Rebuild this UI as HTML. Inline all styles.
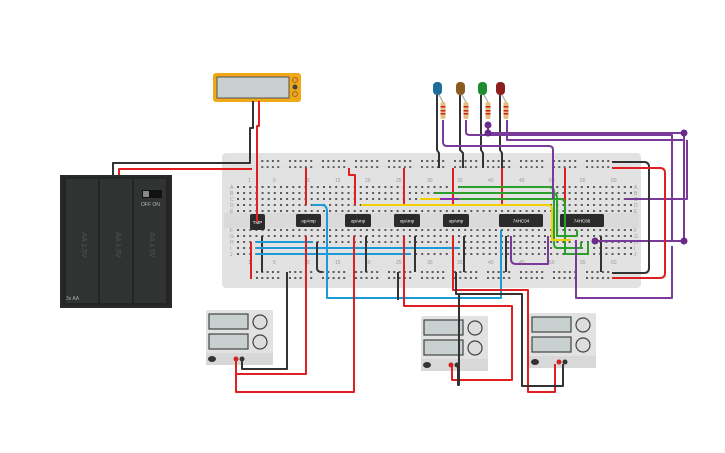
<!DOCTYPE html>
<html><head><meta charset="utf-8"><style>
html,body{margin:0;padding:0;background:#fff;width:725px;height:453px;overflow:hidden}
svg{display:block}
text{font-family:"Liberation Sans",sans-serif}
</style></head><body>
<svg id="s" width="725" height="453" viewBox="0 0 725 453" xmlns="http://www.w3.org/2000/svg">
<!-- breadboard -->
<rect x="222" y="153" width="419" height="135" rx="4" fill="#e2e2e2"/>
<rect x="224" y="213" width="415" height="15" fill="#dadada"/>
<g id="holes" fill="#5a5a5a"></g>
<g id="labels" fill="#9a9a9a" font-size="5"></g>
<line x1="235" y1="166" x2="630" y2="166" stroke="#d6d6d6" stroke-width="0.5"/>

<!-- chips -->
<g font-size="4.5" fill="#fff" text-anchor="middle">
<rect x="250" y="214" width="15" height="16" rx="2" fill="#2b2b2b"/><text x="257.5" y="224">TMP</text>
<rect x="296" y="214" width="25" height="13" rx="1.5" fill="#2b2b2b"/><text x="308.5" y="222.5">opAmp</text>
<rect x="345" y="214" width="26" height="13" rx="1.5" fill="#2b2b2b"/><text x="358" y="222.5">opAmp</text>
<rect x="394" y="214" width="26" height="13" rx="1.5" fill="#2b2b2b"/><text x="407" y="222.5">opAmp</text>
<rect x="443" y="214" width="26" height="13" rx="1.5" fill="#2b2b2b"/><text x="456" y="222.5">opAmp</text>
<rect x="499" y="214" width="44" height="13" rx="1.5" fill="#2b2b2b"/><text x="521" y="222.5">74HC04</text>
<rect x="560" y="214" width="44" height="13" rx="1.5" fill="#2b2b2b"/><text x="582" y="222.5">74HC86</text>
</g>

<!-- battery -->
<rect x="60" y="175" width="112" height="133" fill="#2a2a2a"/>
<rect x="62" y="177" width="108" height="129" fill="#242424"/>
<rect x="66" y="179" width="32" height="124" fill="#2f3432"/>
<rect x="100" y="179" width="32" height="124" fill="#2f3432"/>
<rect x="134" y="179" width="32" height="124" fill="#2f3432"/>
<g fill="#555" font-size="7" text-anchor="middle">
<text transform="translate(82,245) rotate(90)">AA 1.5V</text>
<text transform="translate(116,245) rotate(90)">AA 1.5V</text>
<text transform="translate(150,245) rotate(90)">AA 1.5V</text>
</g>
<rect x="142" y="190" width="20" height="8" fill="#111"/><rect x="143" y="191" width="6" height="6" fill="#888"/>
<text x="141" y="206" font-size="5" fill="#bbb">OFF  ON</text>
<text x="66" y="300" font-size="5" fill="#aaa">3x AA</text>

<!-- multimeter -->
<rect x="213" y="73" width="88" height="29" rx="3" fill="#f0a818"/>
<rect x="217" y="77" width="72" height="21" fill="#c9d0d0" stroke="#555" stroke-width="1"/>
<circle cx="295" cy="80" r="2.5" fill="#e8a030" stroke="#8a5a10" stroke-width="0.7"/>
<circle cx="295" cy="87" r="2.5" fill="#444"/>
<circle cx="295" cy="94" r="2.5" fill="#e8a030" stroke="#8a5a10" stroke-width="0.7"/>

<!-- power supplies -->
<g id="ps"></g>

<!-- wires -->
<g fill="none" stroke-width="2" stroke-linejoin="round">
<!-- battery/multimeter -->
<path d="M113 175 V163 H250 V128 H253 V101" stroke="#333"/>
<path d="M119 175 V169 H252" stroke="#e02020"/>
<path d="M259 101 V126 H257 V222" stroke="#e02020"/>
<path d="M251 242 V279" stroke="#e02020"/>
<path d="M262 236 V272" stroke="#333"/>
<!-- blue -->
<path d="M256 242 H313" stroke="#1a9ad6"/>
<path d="M256 248 H460" stroke="#1a9ad6"/>
<path d="M256 254 H411" stroke="#1a9ad6"/>
<path d="M312 205 H322 Q327 205 327 212 V298 H501 V230" stroke="#1a9ad6"/>
<!-- opamp wires -->
<path d="M306 168 V205" stroke="#e02020"/>
<path d="M306 236 V374 H236 V359" stroke="#e02020"/>
<path d="M317 242 V268 Q317 272 322 272" stroke="#333"/>
<path d="M287 272 V369 H242 V359" stroke="#333"/>
<path d="M349 168 V175 H355 V205" stroke="#e02020"/>
<path d="M354 236 V392 H236 V374" stroke="#e02020"/>
<path d="M366 236 V272" stroke="#333"/>
<path d="M404 168 V205" stroke="#e02020"/>
<path d="M404 236 V306 H512 V380 H452 V366" stroke="#e02020"/>
<path d="M415 236 V272" stroke="#333"/>
<path d="M398 272 V300" stroke="#333"/>
<path d="M453 168 V205" stroke="#e02020"/>
<path d="M453 236 V290 H528 V392 H555 V364" stroke="#e02020"/>
<path d="M464 236 V272" stroke="#333"/>
<path d="M456 272 V294 H522 V386 H563 V364" stroke="#333"/>
<path d="M459 294 V385 H458 V366" stroke="#333"/>
<path d="M502 168 V205" stroke="#e02020"/>
<path d="M506 236 V272" stroke="#333"/>
<path d="M565 168 V205" stroke="#e02020"/>
<path d="M601 236 V272" stroke="#333"/>
<!-- LED legs -->
<path d="M437 95 V150 L439 153 V168" stroke="#333"/>
<path d="M460 95 V150 L463 153 V168" stroke="#333"/>
<path d="M481 95 V150 L483 153 V168" stroke="#333"/>
<path d="M500 95 V150 L502 153 V168" stroke="#333"/>
<!-- green/yellow -->
<path d="M459 187 H549 Q554 187 554 192 V244 Q554 248 558 248 H581 V242" stroke="#2aa02a"/>
<path d="M435 193 H552 Q557 193 557 198 V236 H577 V230" stroke="#2aa02a"/>
<path d="M422 199 H561 Q565 199 565 205 V254 H588 V242" stroke="#2aa02a"/>
<path d="M361 205 H548 Q552 205 552 210 V240 H571" stroke="#f2d000"/>
<path d="M420 199 H440" stroke="#f2d000"/>
<path d="M440 199 H459" stroke="#8a2ab0"/>
<!-- purple -->
<path d="M443 120 V142 Q443 146 447 146 H549 Q553 146 553 150 V199" stroke="#7a3a9a"/>
<path d="M466 120 V132 Q466 135 470 135 H672 V240" stroke="#7a3a9a"/>
<path d="M488 125 V133 H684 V241 H595" stroke="#7a3a9a"/>
<path d="M507 120 V140 H684" stroke="#7a3a9a"/>
<path d="M687 140 V199 H625" stroke="#7a3a9a"/>
<path d="M511 236 V259 Q511 264 516 264 H548 V236" stroke="#7a3a9a"/>
<path d="M576 240 V298 H672 V246" stroke="#7a3a9a"/>
<!-- right rails -->
<path d="M612 162 H644 Q649 162 649 167 V268 Q649 273 644 273 H612" stroke="#333"/>
<path d="M612 168 H660 Q665 168 665 173 V273 Q665 278 660 278 H612" stroke="#e02020"/>
</g>
<g fill="#6a2a8a">
<circle cx="488" cy="125" r="3.5"/><circle cx="488" cy="133" r="3.5"/>
<circle cx="684" cy="133" r="3.5"/><circle cx="684" cy="241" r="3.5"/><circle cx="595" cy="241" r="3.5"/>
</g>
<!-- LEDs & resistors -->
<g id="leds"></g>
</svg>
<script>
var NS="http://www.w3.org/2000/svg";
function el(p,t,a){var e=document.createElementNS(NS,t);for(var k in a)e.setAttribute(k,a[k]);p.appendChild(e);return e;}
var H=document.getElementById('holes');
var rows=[187,193,199,205,211,230,236,242,248,254];
for(var r of rows)for(var i=0;i<65;i++)el(H,'rect',{x:(237+i*6.14).toFixed(1),y:r-1,width:2,height:2});
for(var r of [161,167,272,278]){for(var g=0;g<11;g++)for(var j=0;j<5;j++){var x=256+g*33+j*5.3;if(x<630)el(H,'rect',{x:x.toFixed(1),y:r-1,width:2,height:2});}}
var L=document.getElementById('labels');
var cols=[[1,250],[5,275],[10,306],[15,337],[20,367],[25,398],[30,429],[35,459],[40,490],[45,521],[50,551],[55,582],[60,613]];
for(var c of cols){el(L,'text',{x:c[1]-2,y:182}).textContent=c[0];el(L,'text',{x:c[1]-2,y:264}).textContent=c[0];}
var ab="ABCDE",fj="FGHIJ";
for(var i=0;i<5;i++){el(L,'text',{x:230,y:rows[i]+2}).textContent=ab[i];el(L,'text',{x:634,y:rows[i]+2}).textContent=ab[i];
el(L,'text',{x:230,y:rows[i+5]+2}).textContent=fj[i];el(L,'text',{x:634,y:rows[i+5]+2}).textContent=fj[i];}
var P=document.getElementById('ps');
[[206,310],[421,316],[529,313]].forEach(function(p){var x=p[0],y=p[1];
el(P,'rect',{x:x,y:y,width:67,height:55,rx:2,fill:'#e2e2e2'});
el(P,'rect',{x:x+3,y:y+4,width:39,height:15,fill:'#c9d0d0',stroke:'#444','stroke-width':1.2});
el(P,'rect',{x:x+3,y:y+24,width:39,height:15,fill:'#c9d0d0',stroke:'#444','stroke-width':1.2});
el(P,'circle',{cx:x+54,cy:y+12,r:7,fill:'#ddd',stroke:'#444','stroke-width':1.2});
el(P,'circle',{cx:x+54,cy:y+32,r:7,fill:'#ddd',stroke:'#444','stroke-width':1.2});
el(P,'rect',{x:x,y:y+43,width:67,height:12,fill:'#d8d8d8'});
el(P,'ellipse',{cx:x+6,cy:y+49,rx:4,ry:3,fill:'#333'});
el(P,'circle',{cx:x+30,cy:y+49,r:2.5,fill:'#d02020'});
el(P,'circle',{cx:x+36,cy:y+49,r:2.5,fill:'#333'});});
var LE=document.getElementById('leds');
[[437,'#1e6c9c'],[460,'#8a5a1e'],[482,'#1e8c2e'],[500,'#8c1e1e']].forEach(function(l){
el(LE,'rect',{x:l[0]-4,y:82,width:9,height:13,rx:4,fill:l[1]});
var rx=l[0]+6;el(LE,'line',{x1:l[0]+2,y1:95,x2:rx,y2:102,stroke:'#999','stroke-width':1});
el(LE,'rect',{x:rx-2.5,y:102,width:5,height:17,rx:2,fill:'#e0c080'});
[106,110,113].forEach(function(yy){el(LE,'rect',{x:rx-2.5,y:yy,width:5,height:1.5,fill:'#d02020'});});});
</script>
</body></html>
